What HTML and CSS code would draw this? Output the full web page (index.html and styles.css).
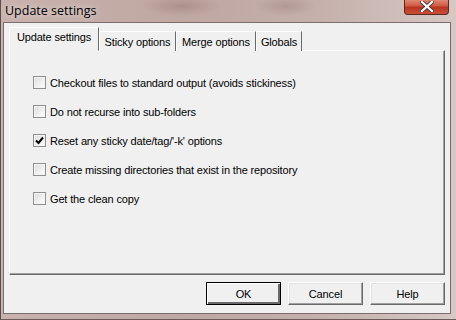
FILE: index.html
```html
<!DOCTYPE html>
<html>
<head>
<meta charset="utf-8">
<link rel="stylesheet" href="styles.css">
</head>
<body>
<div class="window">
  <div class="titlebar">
    <span class="title">Update settings</span>
    <div class="close">
      <svg width="14" height="11" viewBox="0 0 14 11"><path d="M2 1 L12 10 M12 1 L2 10" stroke="#4a3a3a" stroke-width="4" stroke-linecap="square"/><path d="M2 1 L12 10 M12 1 L2 10" stroke="#fff" stroke-width="2.2" stroke-linecap="square"/></svg>
    </div>
  </div>
  <div class="client">
    <div class="tabs">
      <div class="tab active">Update settings</div>
      <div class="tab tab-sticky">Sticky options</div>
      <div class="tab tab-merge">Merge options</div>
      <div class="tab tab-globals">Globals</div>
    </div>
    <div class="panel">
      <label class="row"><span class="box"></span>Checkout files to standard output (avoids stickiness)</label>
      <label class="row"><span class="box"></span>Do not recurse into sub-folders</label>
      <label class="row"><span class="box checked"><svg width="9" height="9" viewBox="0 0 9 9"><path d="M1 4.5 L3.5 7 L8 1.5" stroke="#000" stroke-width="2" fill="none"/></svg></span>Reset any sticky date/tag/'-k' options</label>
      <label class="row"><span class="box"></span>Create missing directories that exist in the repository</label>
      <label class="row"><span class="box"></span>Get the clean copy</label>
    </div>
    <div class="buttons">
      <button class="btn default">OK</button>
      <button class="btn">Cancel</button>
      <button class="btn">Help</button>
    </div>
  </div>
</div>
</body>
</html>
```
FILE: styles.css
```css
html, body {
  margin: 0;
  padding: 0;
  width: 456px;
  height: 320px;
  overflow: hidden;
  background: #ffffff;
}
.window {
  width: 456px;
  height: 320px;
  box-sizing: border-box;
  padding: 0 5px 5px 2px;
  background:
    radial-gradient(ellipse 40px 10px at 180px 6px, rgba(110,80,75,0.25), transparent),
    radial-gradient(ellipse 30px 10px at 285px 6px, rgba(110,80,75,0.22), transparent),
    linear-gradient(90deg, #c9b2ad 0%, #bfa7a2 40%, #c5b0ab 70%, #d6c8c5 100%);
  border-left: 1px solid #5c4e4c;
  border-bottom: 1px solid #6a5a58;
  display: flex;
  flex-direction: column;
}
.titlebar {
  height: 22px;
  position: relative;
  flex: none;
}
.title {
  position: absolute;
  left: 2px;
  top: 2px;
  font-family: "Open Sans", sans-serif;
  font-size: 12.5px;
  color: #000;
  text-shadow: 0 0 6px rgba(255,255,255,0.8);
}
.close {
  position: absolute;
  left: 401px;
  top: -1px;
  width: 45px;
  height: 16px;
  box-sizing: border-box;
  border: 1px solid #5a2a22;
  border-top: none;
  border-radius: 0 0 4px 4px;
  background: linear-gradient(#e0907c 0%, #d05b44 45%, #b8351f 55%, #c95036 100%);
  display: flex;
  align-items: center;
  justify-content: center;
}
.client {
  flex: 1;
  background: #f0f0f0;
  border: 1px solid #7b6d6b;
  display: flex;
  flex-direction: column;
  padding: 5px 5px 7px 5px;
  font-family: "Liberation Sans", Arial, sans-serif;
  font-size: 11px;
  letter-spacing: -0.15px;
  color: #000;
}
.tabs {
  display: flex;
  align-items: flex-end;
  height: 23px;
  padding-left: 2px;
  position: relative;
  z-index: 1;
  margin-bottom: -1px;
}
.tab {
  height: 20px;
  box-sizing: border-box;
  border: 1px solid #a0a0a0;
  border-bottom: none;
  border-left-color: #ffffff;
  border-top-color: #ffffff;
  border-right: 1px solid #696969;
  padding: 4px 0 0 0;
  text-align: center;
  background: #f0f0f0;
  white-space: nowrap;
}
.tab.active {
  width: 90px;
  height: 24px;
  padding-top: 3px;
  margin-left: -2px;
  position: relative;
  z-index: 2;
  border-bottom: 1px solid #f0f0f0;
}
.tab-sticky { width: 77px; }
.tab-merge { width: 80px; }
.tab-globals { width: 46px; }
.panel {
  height: 225px;
  box-sizing: border-box;
  border: 1px solid #ffffff;
  border-right-color: #696969;
  border-bottom-color: #696969;
  box-shadow: inset -1px -1px 0 #a0a0a0;
  padding: 25px 0 0 23px;
  display: flex;
  flex-direction: column;
  gap: 16px;
}
.row {
  display: flex;
  align-items: center;
  height: 13px;
  gap: 4px;
}
.box {
  width: 13px;
  height: 13px;
  box-sizing: border-box;
  border: 1px solid #8f8f8f;
  background: linear-gradient(135deg, #dcdcdc, #ffffff);
  box-shadow: inset 0 0 0 1px #f4f4f4;
  display: flex;
  align-items: center;
  justify-content: center;
  flex: none;
}
.buttons {
  display: flex;
  justify-content: flex-end;
  gap: 7px;
  margin-top: 7px;
}
.btn {
  width: 75px;
  height: 23px;
  box-sizing: border-box;
  font-family: "Liberation Sans", Arial, sans-serif;
  font-size: 11px;
  letter-spacing: -0.15px;
  color: #000;
  background: #f0f0f0;
  border: 1px solid;
  border-color: #ffffff #696969 #696969 #ffffff;
  box-shadow: inset -1px -1px 0 #a0a0a0, inset 1px 1px 0 #e3e3e3;
  padding: 0;
}
.btn.default {
  border: 1px solid #000;
  box-shadow: inset 1px 1px 0 #fff, inset -2px -2px 0 #696969;
}
```
